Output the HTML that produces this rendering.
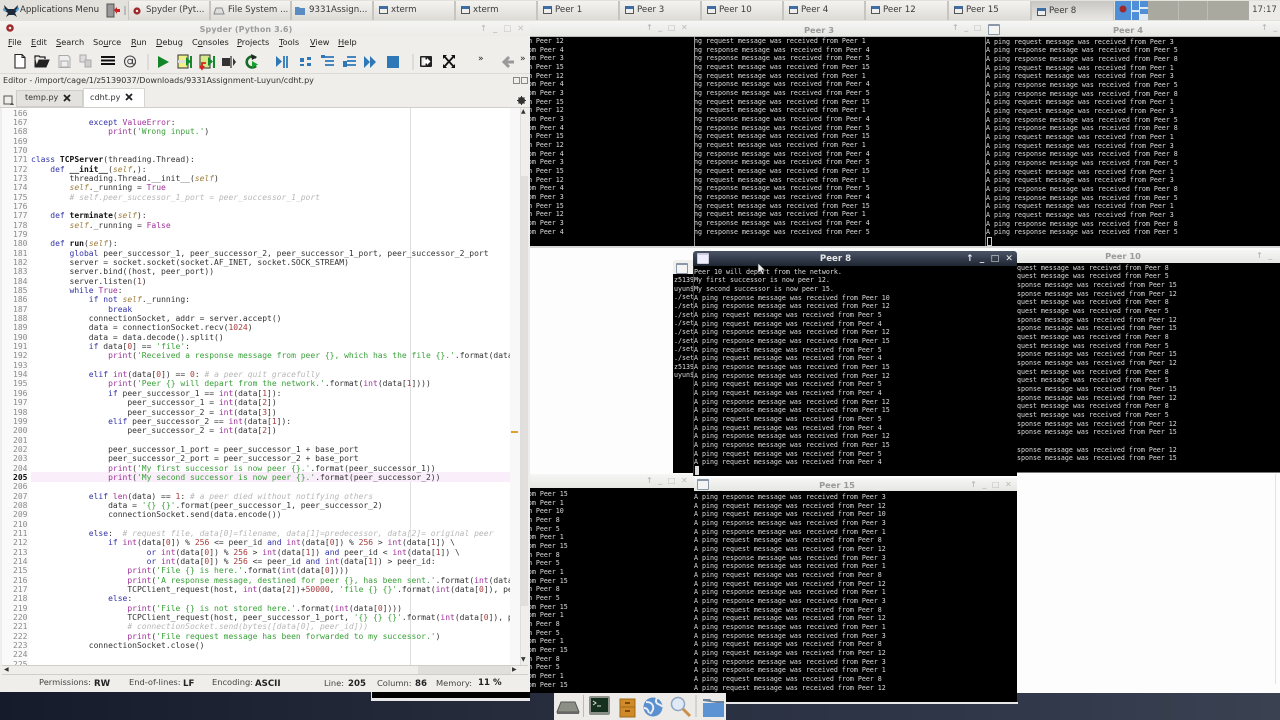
<!DOCTYPE html>
<html style="background:#252b3a"><head><meta charset="utf-8"><style>
html,body{margin:0;padding:0;width:1280px;height:720px;overflow:hidden}
#w{position:absolute;left:0;top:0;width:1280px;height:720px;overflow:hidden;filter:blur(.3px);font-family:"DejaVu Sans","Liberation Sans",sans-serif}
div,pre,span.a,svg.a{position:absolute}
.t{white-space:nowrap}
.tb{top:1px;height:19px;width:80px;background:linear-gradient(#f4f3f0,#dcdbd6);border:1px solid #c6c5c0;border-width:0 1px;box-sizing:border-box;font-size:8.65px;line-height:19px;color:#3a3a3a;white-space:nowrap;padding-left:18px}
.tb i{position:absolute;left:5px;top:5px;width:9px;height:8px;border:1px solid #555;border-top:3px solid #3f6ea5;box-sizing:border-box;background:#eee}
.m{top:36px;font-size:8.2px;line-height:12px;color:#222;white-space:nowrap}
.m u{text-decoration:underline}
.wt{font-size:8.3px;font-weight:bold;color:#9a9a9a;white-space:nowrap;text-align:center;line-height:12px}
.ctl{font-size:8px;color:#bbb;white-space:pre;line-height:10px;font-weight:bold}
.term{background:#000;overflow:hidden}
pre.x{margin:0;font-family:"DejaVu Sans Mono","Liberation Mono",monospace;font-size:7.4px;line-height:8.67px;color:#dcdcdc;white-space:pre;transform:scaleX(.898);transform-origin:0 0}
pre.c{margin:0;left:0;top:0;font-family:"DejaVu Sans Mono","Liberation Mono",monospace;font-size:8px;line-height:9.34px;color:#333;white-space:pre}
pre.c b{font-weight:bold;color:#111}
.k{color:#3232a8}.s{color:#3aa03a}.p{color:#a0309a}.n{color:#a83a3a}.o{color:#b8b8b8;font-style:italic}.f{color:#a08040;font-style:italic}
.st{top:676px;font-size:8.3px;line-height:12px;color:#444;white-space:nowrap}
.st b{color:#222;font-size:8.6px}
.winicon{width:10px;height:8px;border:1px solid #8a97a8;border-top:2px solid #8a97a8;background:#f4f4f4;border-radius:1px}
</style></head><body><div id="w">

<!-- wallpaper -->
<div style="left:0;top:0;width:1280px;height:720px;background:#252b3a"></div>
<div style="left:0;top:690px;width:1280px;height:30px;background:linear-gradient(90deg,#161b2b,#262c3c 40%,#30384a 80%,#3a4252)"></div>

<!-- top panel -->
<div style="left:0;top:0;width:1280px;height:21px;background:#e2e1dc"></div>
<svg class="a" style="left:3px;top:3px" width="16" height="15" viewBox="0 0 16 15"><path d="M1 2l4 4h6l4-4-1 6-2 2 2 4-3-2H6l-3 2 2-4-3-2z" fill="#1d2a3a"/><path d="M0 6l3 2M16 5l-3 3" stroke="#4aa0d8" stroke-width="2"/></svg>
<div class="t" style="left:20px;top:4px;font-size:8.65px;line-height:12px;color:#333">Applications Menu</div>
<svg class="a" style="left:106px;top:3px" width="16" height="15"><rect x="1" y="1" width="7" height="13" fill="#999" stroke="#555"/><path d="M8 7l3-3v2h3v3h-3v2z" fill="#d02020"/></svg>
<div style="left:124px;top:6px;width:2px;height:9px;background:#bbb"></div>
<div class="tb" style="left:128px;width:82px;padding-left:17px">Spyder (Pyt...<svg class="a" style="left:3px;top:5px" width="10" height="10"><circle cx="5" cy="5" r="3.6" fill="#a02a2a"/><circle cx="5" cy="5" r="1.2" fill="#eee"/></svg></div>
<div class="tb" style="left:210px;width:81px;padding-left:17px">File System ...<svg class="a" style="left:2px;top:5px" width="12" height="10"><path d="M1 8l2-6h6l2 6z" fill="#ddd" stroke="#888"/></svg></div>
<div class="tb" style="left:291px;width:82px;padding-left:17px">9331Assign...<svg class="a" style="left:3px;top:5px" width="11" height="10"><path d="M0 1h4l1 1h5v7H0z" fill="#5a8cc4"/></svg></div>
<div class="tb" style="left:373px;width:82px;padding-left:17px">xterm<i></i></div>
<div class="tb" style="left:455px;width:82px;padding-left:17px">xterm<i></i></div>
<div class="tb" style="left:537px;width:82px;padding-left:17px">Peer 1<i></i></div>
<div class="tb" style="left:619px;width:82px;padding-left:17px">Peer 3<i></i></div>
<div class="tb" style="left:701px;width:82px;padding-left:17px">Peer 10<i></i></div>
<div class="tb" style="left:783px;width:82px;padding-left:17px">Peer 4<i></i></div>
<div class="tb" style="left:865px;width:83px;padding-left:17px">Peer 12<i></i></div>
<div class="tb" style="left:948px;width:83px;padding-left:17px">Peer 15<i></i></div>
<div class="tb" style="left:1031px;width:83px;padding-left:17px;background:linear-gradient(#c8c7c4,#e8e7e4);line-height:21px">Peer 8<i style="top:7px"></i></div>
<div style="left:1115px;top:1px;width:33px;height:19px;background:#dfe9f4"></div>
<svg class="a" style="left:1115px;top:1px" width="33" height="19"><rect width="16" height="19" fill="#4f8fd8"/><rect x="17" y="0" width="7" height="9" fill="#4f8fd8"/><rect x="25" y="0" width="8" height="6" fill="#4f8fd8"/><rect x="17" y="11" width="7" height="8" fill="#4f8fd8"/><rect x="25" y="8" width="8" height="5" fill="#4f8fd8"/><circle cx="8" cy="8" r="3.5" fill="#a02a2a"/></svg>
<div style="left:1148px;top:1px;width:100px;height:19px;background:#a9a99f"></div>
<div style="left:1178px;top:1px;width:1px;height:19px;background:#bdbdb5"></div>
<div style="left:1207px;top:1px;width:1px;height:19px;background:#bdbdb5"></div>
<div style="left:1248px;top:1px;width:32px;height:19px;background:#ecebe7;font-size:8.65px;line-height:19px;text-align:center;color:#444;border-left:1px solid #aaa;box-sizing:border-box">17:17</div>

<!-- white backgrounds -->
<div style="left:530px;top:246px;width:750px;height:447px;background:#fdfdfd"></div>
<div style="left:530px;top:246px;width:750px;height:2px;background:#d8d8d6"></div>
<div style="left:1275px;top:474px;width:1px;height:210px;background:#e2e2e2"></div>

<!-- Peer 1 window -->
<div style="left:530px;top:21px;width:164px;height:16px;background:linear-gradient(#f6f6f4,#e6e6e3);border-bottom:1px solid #bbb;box-sizing:border-box"></div>
<div class="ctl" style="left:646px;top:23px">↑  _  □  ✕</div>
<div class="term" style="left:530px;top:37px;width:164px;height:209px"><pre class="x" style="left:-158px;top:0">A ping request message was received from Peer 12
A ping response message was received from Peer 4
A ping response message was received from Peer 3
A ping request message was received from Peer 15
A ping request message was received from Peer 12
A ping response message was received from Peer 4
A ping response message was received from Peer 3
A ping request message was received from Peer 15
A ping request message was received from Peer 12
A ping response message was received from Peer 3
A ping response message was received from Peer 4
A ping request message was received from Peer 15
A ping request message was received from Peer 12
A ping response message was received from Peer 4
A ping response message was received from Peer 3
A ping request message was received from Peer 15
A ping request message was received from Peer 12
A ping response message was received from Peer 4
A ping response message was received from Peer 3
A ping request message was received from Peer 15
A ping request message was received from Peer 12
A ping response message was received from Peer 3
A ping response message was received from Peer 4</pre></div>

<!-- Peer 3 -->
<div style="left:694px;top:21px;width:292px;height:16px;background:linear-gradient(#f6f6f4,#e6e6e3);border-bottom:1px solid #bbb;box-sizing:border-box"></div>
<div class="wt" style="left:694px;top:24px;width:250px">Peer 3</div>
<div class="ctl" style="left:952px;top:23px">↑  _  □</div>
<div class="term" style="left:694px;top:37px;width:292px;height:209px;border-left:1px solid #999;box-sizing:border-box"><pre class="x" style="left:-17px;top:0">A ping request message was received from Peer 1
A ping response message was received from Peer 4
A ping response message was received from Peer 5
A ping request message was received from Peer 15
A ping request message was received from Peer 1
A ping response message was received from Peer 4
A ping response message was received from Peer 5
A ping request message was received from Peer 15
A ping request message was received from Peer 1
A ping response message was received from Peer 4
A ping response message was received from Peer 5
A ping request message was received from Peer 15
A ping request message was received from Peer 1
A ping response message was received from Peer 4
A ping response message was received from Peer 5
A ping request message was received from Peer 15
A ping request message was received from Peer 1
A ping response message was received from Peer 5
A ping response message was received from Peer 4
A ping request message was received from Peer 15
A ping request message was received from Peer 1
A ping response message was received from Peer 4
A ping response message was received from Peer 5</pre></div>

<!-- Peer 4 -->
<div style="left:986px;top:21px;width:294px;height:16px;background:linear-gradient(#f6f6f4,#e6e6e3);border-bottom:1px solid #bbb;box-sizing:border-box"></div>
<div class="winicon" style="left:988px;top:24px"></div>
<div class="wt" style="left:1028px;top:24px;width:200px">Peer 4</div>
<div class="ctl" style="left:1261px;top:23px">↑  _</div>
<div class="term" style="left:985px;top:37px;width:295px;height:209px;border-left:1px solid #777;box-sizing:border-box"><pre class="x" style="left:0;top:0.500px">A ping request message was received from Peer 3
A ping response message was received from Peer 5
A ping response message was received from Peer 8
A ping request message was received from Peer 1
A ping request message was received from Peer 3
A ping response message was received from Peer 5
A ping response message was received from Peer 8
A ping request message was received from Peer 1
A ping request message was received from Peer 3
A ping response message was received from Peer 5
A ping response message was received from Peer 8
A ping request message was received from Peer 1
A ping request message was received from Peer 3
A ping response message was received from Peer 8
A ping response message was received from Peer 5
A ping request message was received from Peer 1
A ping request message was received from Peer 3
A ping response message was received from Peer 8
A ping response message was received from Peer 5
A ping request message was received from Peer 1
A ping request message was received from Peer 3
A ping response message was received from Peer 8
A ping response message was received from Peer 5</pre><div style="left:1px;top:200px;width:3px;height:7px;border:1px solid #ccc"></div></div>

<!-- back xterm -->
<div style="left:673px;top:260px;width:21px;height:14px;background:#f0f0ee;border-radius:3px 0 0 0"></div>
<div class="winicon" style="left:676px;top:263px"></div>
<div class="term" style="left:673px;top:274px;width:21px;height:199px"><pre class="x" style="left:1px;top:2px">z5139
uyun$
./set
./set
./set
./set
./set
./set
./set
./set
z5139
uyun$</pre></div>

<!-- Peer 10 -->
<div style="left:1017px;top:250px;width:263px;height:13px;background:linear-gradient(#f6f6f4,#e6e6e3)"></div>
<div class="wt" style="left:1017px;top:250px;width:212px">Peer 10</div>
<div class="ctl" style="left:1256px;top:251px">↑  _</div>
<div class="term" style="left:1017px;top:263px;width:263px;height:209px"><pre class="x" style="left:-36px;top:0.700px">A ping request message was received from Peer 8
A ping request message was received from Peer 5
A ping response message was received from Peer 15
A ping response message was received from Peer 12
A ping request message was received from Peer 8
A ping request message was received from Peer 5
A ping response message was received from Peer 12
A ping response message was received from Peer 15
A ping request message was received from Peer 8
A ping request message was received from Peer 5
A ping response message was received from Peer 15
A ping response message was received from Peer 12
A ping request message was received from Peer 8
A ping request message was received from Peer 5
A ping response message was received from Peer 15
A ping response message was received from Peer 12
A ping request message was received from Peer 8
A ping request message was received from Peer 5
A ping response message was received from Peer 12
A ping response message was received from Peer 15

A ping response message was received from Peer 12
A ping response message was received from Peer 15</pre></div>
<div style="left:1017px;top:472px;width:263px;height:1px;background:#777"></div>

<!-- Peer 15 -->
<div style="left:693px;top:476px;width:325px;height:2px;background:#fff"></div>
<div style="left:694px;top:478px;width:323px;height:13px;background:linear-gradient(#f6f6f4,#e6e6e3)"></div>
<div class="winicon" style="left:697px;top:479px"></div>
<div class="wt" style="left:694px;top:479px;width:286px">Peer 15</div>
<div class="ctl" style="left:970px;top:480px">↑  _  □  ✕</div>
<div class="term" style="left:694px;top:491px;width:323px;height:211px"><pre class="x" style="left:0;top:2px">A ping response message was received from Peer 3
A ping request message was received from Peer 12
A ping request message was received from Peer 10
A ping response message was received from Peer 3
A ping response message was received from Peer 1
A ping request message was received from Peer 8
A ping request message was received from Peer 12
A ping response message was received from Peer 3
A ping response message was received from Peer 1
A ping request message was received from Peer 8
A ping request message was received from Peer 12
A ping response message was received from Peer 1
A ping response message was received from Peer 3
A ping request message was received from Peer 8
A ping request message was received from Peer 12
A ping response message was received from Peer 1
A ping response message was received from Peer 3
A ping request message was received from Peer 8
A ping request message was received from Peer 12
A ping response message was received from Peer 3
A ping response message was received from Peer 1
A ping request message was received from Peer 8
A ping request message was received from Peer 12</pre></div>
<div style="left:693px;top:702px;width:325px;height:2px;background:#e8e8e8"></div>

<!-- Peer 12 (bottom-left) -->
<div style="left:530px;top:474px;width:164px;height:14px;background:linear-gradient(#f6f6f4,#e6e6e3)"></div>
<div class="ctl" style="left:646px;top:476px">↑  _  □  ✕</div>
<div class="term" style="left:530px;top:488px;width:164px;height:205px"><pre class="x" style="left:-158px;top:2px">A ping response message was received from Peer 15
A ping response message was received from Peer 1
A ping request message was received from Peer 10
A ping request message was received from Peer 8
A ping request message was received from Peer 5
A ping response message was received from Peer 1
A ping response message was received from Peer 15
A ping request message was received from Peer 8
A ping request message was received from Peer 5
A ping response message was received from Peer 1
A ping response message was received from Peer 15
A ping request message was received from Peer 8
A ping request message was received from Peer 5
A ping response message was received from Peer 15
A ping response message was received from Peer 1
A ping request message was received from Peer 8
A ping request message was received from Peer 5
A ping response message was received from Peer 1
A ping response message was received from Peer 15
A ping request message was received from Peer 8
A ping request message was received from Peer 5
A ping response message was received from Peer 1
A ping response message was received from Peer 15</pre></div>

<!-- Peer 8 active -->
<div style="left:693px;top:251px;width:324px;height:15px;background:linear-gradient(#4a5567,#1f2633);border-radius:3px 3px 0 0"></div>
<div class="winicon" style="left:697px;top:253px;border-color:#ccd;background:#eef"></div>
<div class="wt" style="left:693px;top:253px;width:285px;color:#e8e8e8;font-size:8.6px">Peer 8</div>
<div class="ctl" style="left:966px;top:254px;color:#eee;font-size:9px">↑  _  □  ✕</div>
<div class="term" style="left:693px;top:266px;width:324px;height:210px;border-left:1px solid #333;box-sizing:border-box"><pre class="x" style="left:0;top:1.500px">Peer 10 will depart from the network.
My first successor is now peer 12.
My second successor is now peer 15.
A ping response message was received from Peer 10
A ping response message was received from Peer 12
A ping request message was received from Peer 5
A ping request message was received from Peer 4
A ping response message was received from Peer 12
A ping response message was received from Peer 15
A ping request message was received from Peer 5
A ping request message was received from Peer 4
A ping response message was received from Peer 15
A ping response message was received from Peer 12
A ping request message was received from Peer 5
A ping request message was received from Peer 4
A ping response message was received from Peer 12
A ping response message was received from Peer 15
A ping request message was received from Peer 5
A ping request message was received from Peer 4
A ping response message was received from Peer 12
A ping response message was received from Peer 15
A ping request message was received from Peer 5
A ping request message was received from Peer 4</pre><div style="left:1px;top:200px;width:4px;height:9px;background:#ddd"></div></div>
<svg class="a" style="left:757px;top:262px" width="9" height="13"><path d="M1 1v10l2.500-2 2 3.500 1.500-1-2-3.500h3z" fill="#eee" stroke="#333" stroke-width=".6"/></svg>

<!-- strip behind spyder -->
<div style="left:371px;top:690px;width:159px;height:11px;background:#000;border:solid #e8e8e8;border-width:0 0 3px 1px;box-sizing:border-box"></div>

<!-- Spyder window -->
<div style="left:0;top:21px;width:530px;height:671px;background:#efeeeb"></div>
<div style="left:0;top:21px;width:530px;height:15px;background:linear-gradient(#f4f4f2,#ecebe8)"></div>
<svg class="a" style="left:5px;top:23px" width="10" height="10"><circle cx="5" cy="5" r="3.8" fill="#a02a2a"/><circle cx="5" cy="5" r="1.300" fill="#eee"/></svg>
<div class="wt" style="left:0;top:24px;width:492px;color:#9c9c9c;font-size:8px;letter-spacing:.1px">Spyder (Python 3.6)</div>
<div class="ctl" style="left:480px;top:24px;color:#c4c4c4;font-size:8.5px">↑  _  □  ✕</div>
<div class="m" style="left:8px"><u>F</u>ile</div>
<div class="m" style="left:31px"><u>E</u>dit</div>
<div class="m" style="left:56px"><u>S</u>earch</div>
<div class="m" style="left:93px">So<u>u</u>rce</div>
<div class="m" style="left:131px"><u>R</u>un</div>
<div class="m" style="left:156px"><u>D</u>ebug</div>
<div class="m" style="left:192px">C<u>o</u>nsoles</div>
<div class="m" style="left:237px"><u>P</u>rojects</div>
<div class="m" style="left:279px"><u>T</u>ools</div>
<div class="m" style="left:310px"><u>V</u>iew</div>
<div class="m" style="left:338px"><u>H</u>elp</div>

<!-- toolbar icons -->
<svg class="a" style="left:0;top:50px" width="530" height="24" viewBox="0 0 530 24">
<path d="M15 4.500h7l3 3v10.500H15z" fill="#fff" stroke="#222" stroke-width="1.100"/><path d="M22 4.500v3h3" fill="none" stroke="#222"/>
<path d="M35 8v9h11l3-7H39l-2 5" fill="#222" stroke="#222"/><path d="M35 8V6h4l1 1h5v2" fill="none" stroke="#222" stroke-width="1.300"/>
<path d="M59 5.500h9l2 2v10H59z" fill="#eee" stroke="#aaa"/><rect x="61" y="11" width="7" height="6" fill="none" stroke="#aaa"/>
<rect x="80" y="5" width="6" height="7" fill="#ddd" stroke="#aaa"/><rect x="85" y="10" width="6" height="7" fill="#ccc" stroke="#aaa"/>
<path d="M101 7h14M101 10.500h14M101 14h14" stroke="#111" stroke-width="2"/>
<circle cx="130" cy="11.500" r="5.500" fill="none" stroke="#444" stroke-width="1.100"/><circle cx="130" cy="11.500" r="2.300" fill="none" stroke="#444"/><path d="M132.500 9v4c0 1.500 2.500 1.500 3 0" fill="none" stroke="#444"/>
<path d="M158 6l11 6-11 6z" fill="#14862a"/>
<rect x="178" y="5" width="10" height="13" fill="#f0ef88" stroke="#333"/><rect x="178" y="10" width="10" height="3" fill="#ddd"/><path d="M186 7l5 4.500-5 4.500z" fill="#148a2a"/><rect x="190" y="6" width="2" height="12" fill="#148a2a"/>
<rect x="200" y="5" width="10" height="13" fill="#d8e888" stroke="#333"/><path d="M208 7l5 4.500-5 4.500z" fill="#148a2a"/><rect x="213" y="6" width="2" height="12" fill="#148a2a"/><path d="M206 13h-4v5m-2-2 2 3 2-3" fill="none" stroke="#e02020" stroke-width="1.800"/>
<rect x="222" y="8" width="8" height="8" fill="#333"/><path d="M231 6v12" stroke="#555" stroke-width="1.500"/><path d="M233 8l3 4-3 4z" fill="#333"/>
<path d="M256 8a5.500 5.500 0 1 0 0 8" fill="none" stroke="#1a6a2a" stroke-width="2.600"/><path d="M251 4l6 3-5 3z" fill="#222"/><path d="M252 11l6 3.500-6 3.500z" fill="#14a02a"/>
<path d="M276 6l6 5.500-6 5.500z" fill="#2f78b8"/><path d="M284 6v12M287 6v12" stroke="#2f78b8" stroke-width="1.800"/>
<path d="M300 8h4v4h-4zM307 7h4v3h-4zM307 13h4v3h-4zM300 14h4v2h-4z" fill="#2f78b8"/>
<path d="M321 5h4v3h-4z" fill="#2f78b8"/><path d="M325 7h9M325 11h9M325 15h9" stroke="#2f78b8" stroke-width="1.700"/>
<path d="M343 11h4v6h-4z" fill="#2f78b8"/><path d="M347 7h9M347 11h9M347 15h9" stroke="#2f78b8" stroke-width="1.700"/>
<path d="M364 6l6 6-6 6zM370 6l6 6-6 6z" fill="#2f78b8"/>
<rect x="387" y="6" width="12" height="12" fill="#2f78b8"/>
<rect x="420" y="6" width="12" height="11" fill="#222" rx="1"/><rect x="421.500" y="7.500" width="4" height="8" fill="#eee"/><path d="M424 9.500h3V8l3.500 3.500-3.500 3.500v-1.500h-3z" fill="#fff"/>
<path d="M444 6l10 11M454 6l-10 11" stroke="#111" stroke-width="1.800"/><path d="M443 5h4l-4 4zM455 5h-4l4 4zM443 18h4l-4-4zM455 18h-4l4-4z" fill="#111"/>
<path d="M514 12h-9m4-5-5 5 5 5" fill="none" stroke="#9a9a9a" stroke-width="3"/>
</svg>
<div class="t" style="left:478px;top:54px;font-size:9px;color:#222">»</div>
<div class="t" style="left:520px;top:54px;font-size:9px;color:#222">»</div>
<div style="left:147px;top:54px;width:2px;height:16px;background:#dddcd8"></div>
<div style="left:412px;top:54px;width:2px;height:16px;background:#dddcd8"></div>
<div style="left:0;top:73px;width:530px;height:1px;background:#dcdbd7"></div>

<div class="t" style="left:3px;top:75px;font-size:8.04px;line-height:11px;color:#333">Editor - /import/cage/1/z5139037/Downloads/9331Assignment-Luyun/cdht.py</div>
<div style="left:513px;top:77px;width:5px;height:5px;border:1px solid #888"></div>
<div style="left:521px;top:77px;width:5px;height:5px;border:1px solid #888"></div>

<!-- tabs -->
<svg class="a" style="left:3px;top:95px" width="12" height="11"><path d="M1 1h8v8H1z" fill="none" stroke="#555"/><path d="M9 7l2 3H7z" fill="#555"/></svg>
<div style="left:16px;top:90px;width:67px;height:17px;background:#e3e2de;border:1px solid #cfcec9;box-sizing:border-box"></div>
<div class="t" style="left:25px;top:92px;font-size:8px;line-height:12px;color:#333">temp.py</div>
<svg class="a" style="left:62px;top:93px" width="10" height="10"><path d="M2 2l6 6M8 2l-6 6" stroke="#222" stroke-width="1.800"/></svg>
<div style="left:83px;top:88px;width:62px;height:20px;background:#fff;border:1px solid #d6d5d0;border-bottom:0;box-sizing:border-box"></div>
<div class="t" style="left:90px;top:91px;font-size:8.1px;line-height:12px;color:#333">cdht.py</div>
<svg class="a" style="left:124px;top:92px" width="10" height="10"><path d="M2 2l6 6M8 2l-6 6" stroke="#222" stroke-width="1.800"/></svg>
<svg class="a" style="left:516px;top:95px" width="12" height="12"><circle cx="5.500" cy="5.500" r="3.500" fill="#333"/><circle cx="5.500" cy="5.500" r="1.200" fill="#eee"/><path d="M5.500 1v9M1 5.500h9M2.500 2.500l6 6M8.500 2.500l-6 6" stroke="#333"/></svg>
<div style="left:0;top:107px;width:530px;height:1px;background:#cfcec9"></div>

<!-- editor -->
<div style="left:2px;top:108px;width:508px;height:557px;background:#fff;overflow:hidden">
<div style="left:0;top:0;width:27px;height:557px;background:#fafafa"></div>
<div style="left:408px;top:0;width:1px;height:557px;background:#dedede"></div>
<div style="left:29px;top:364px;width:479px;height:9.500px;background:#f9eef9"></div>
<pre class="c" style="left:11px;top:0.500px;color:#8a8a8a">166
167
168
169
170
171
172
173
174
175
176
177
178
179
180
181
182
183
184
185
186
187
188
189
190
191
192
193
194
195
196
197
198
199
200
201
202
203
204
<b>205</b>
206
207
208
209
210
211
212
213
214
215
216
217
218
219
220
221
222
223
224
225</pre>
<pre class="c" style="left:29px;top:0.500px">

            <span class="k">except</span> <span class="p">ValueError</span>:
                <span class="p">print</span>(<span class="s">'Wrong input.'</span>)


<span class="k">class</span> <b>TCPServer</b>(threading.Thread):
    <span class="k">def</span> <b>__init__</b>(<span class="f">self</span>,):
        threading.Thread.__init__(<span class="f">self</span>)
        <span class="f">self</span>._running = <span class="p">True</span>
        <span class="o"># self.peer_successor_1_port = peer_successor_1_port</span>

    <span class="k">def</span> <b>terminate</b>(<span class="f">self</span>):
        <span class="f">self</span>._running = <span class="p">False</span>

    <span class="k">def</span> <b>run</b>(<span class="f">self</span>):
        <span class="k">global</span> peer_successor_1, peer_successor_2, peer_successor_1_port, peer_successor_2_port
        server = socket.socket(socket.AF_INET, socket.SOCK_STREAM)
        server.bind((host, peer_port))
        server.listen(<span class="n">1</span>)
        <span class="k">while</span> <span class="p">True</span>:
            <span class="k">if</span> <span class="k">not</span> <span class="f">self</span>._running:
                <span class="k">break</span>
            connectionSocket, addr = server.accept()
            data = connectionSocket.recv(<span class="n">1024</span>)
            data = data.decode().split()
            <span class="k">if</span> data[<span class="n">0</span>] == <span class="s">'file'</span>:
                <span class="p">print</span>(<span class="s">'Received a response message from peer {}, which has the file {}.'</span>.format(data[1], data[2]))

            <span class="k">elif</span> <span class="p">int</span>(data[<span class="n">0</span>]) == <span class="n">0</span>: <span class="o"># a peer quit gracefully</span>
                <span class="p">print</span>(<span class="s">'Peer {} will depart from the network.'</span>.format(<span class="p">int</span>(data[<span class="n">1</span>])))
                <span class="k">if</span> peer_successor_1 == <span class="p">int</span>(data[<span class="n">1</span>]):
                    peer_successor_1 = <span class="p">int</span>(data[<span class="n">2</span>])
                    peer_successor_2 = <span class="p">int</span>(data[<span class="n">3</span>])
                <span class="k">elif</span> peer_successor_2 == <span class="p">int</span>(data[<span class="n">1</span>]):
                    peer_successor_2 = <span class="p">int</span>(data[<span class="n">2</span>])

                peer_successor_1_port = peer_successor_1 + base_port
                peer_successor_2_port = peer_successor_2 + base_port
                <span class="p">print</span>(<span class="s">'My first successor is now peer {}.'</span>.format(peer_successor_1))
                <span class="p">print</span>(<span class="s">'My second successor is now peer {}.'</span>.format(peer_successor_2))

            <span class="k">elif</span> <span class="p">len</span>(data) == <span class="n">1</span>: <span class="o"># a peer died without notifying others</span>
                data = <span class="s">'{} {}'</span>.format(peer_successor_1, peer_successor_2)
                connectionSocket.send(data.encode())

            <span class="k">else</span>:  <span class="o"># request file, data[0]=filename, data[1]=predecessor, data[2]= original peer</span>
                <span class="k">if</span> <span class="p">int</span>(data[<span class="n">0</span>]) % <span class="n">256</span> &lt;= peer_id <span class="k">and</span> <span class="p">int</span>(data[<span class="n">0</span>]) % <span class="n">256</span> &gt; <span class="p">int</span>(data[<span class="n">1</span>]) \
                        <span class="k">or</span> <span class="p">int</span>(data[<span class="n">0</span>]) % <span class="n">256</span> &gt; <span class="p">int</span>(data[<span class="n">1</span>]) <span class="k">and</span> peer_id &lt; <span class="p">int</span>(data[<span class="n">1</span>]) \
                        <span class="k">or</span> <span class="p">int</span>(data[<span class="n">0</span>]) % <span class="n">256</span> &lt;= peer_id <span class="k">and</span> <span class="p">int</span>(data[<span class="n">1</span>]) &gt; peer_id:
                    <span class="p">print</span>(<span class="s">'File {} is here.'</span>.format(<span class="p">int</span>(data[<span class="n">0</span>])))
                    <span class="p">print</span>(<span class="s">'A response message, destined for peer {}, has been sent.'</span>.format(<span class="p">int</span>(data[1])))
                    TCPClient_request(host, <span class="p">int</span>(data[<span class="n">2</span>])+<span class="n">50000</span>, <span class="s">'file {} {}'</span>.format(<span class="p">int</span>(data[<span class="n">0</span>]), peer_id))
                <span class="k">else</span>:
                    <span class="p">print</span>(<span class="s">'File {} is not stored here.'</span>.format(<span class="p">int</span>(data[<span class="n">0</span>])))
                    TCPClient_request(host, peer_successor_1_port, <span class="s">'{} {} {}'</span>.format(<span class="p">int</span>(data[<span class="n">0</span>]), peer_id))
                    <span class="o"># connectionSocket.send(bytes([data[0], peer_id]))</span>
                    <span class="p">print</span>(<span class="s">'File request message has been forwarded to my successor.'</span>)
            connectionSocket.close()</pre>
</div>

<!-- scrollbars -->
<div style="left:510px;top:108px;width:10px;height:557px;background:#f8f8f8"></div>
<div style="left:511px;top:431px;width:7px;height:2px;background:#e0a030"></div>
<div style="left:520px;top:108px;width:8px;height:557px;background:#efeeeb;border-left:1px solid #ddd;box-sizing:border-box"></div>
<div style="left:521px;top:176px;width:7px;height:430px;background:#e0dfdb"></div>
<div class="t" style="left:521px;top:108px;font-size:6px;color:#333">▲</div>
<div class="t" style="left:521px;top:656px;font-size:6px;color:#333">▼</div>
<div style="left:2px;top:665px;width:526px;height:10px;background:#efeeeb;border:solid #cfcec9;border-width:1px 0;box-sizing:border-box"></div>
<div style="left:418px;top:666px;width:93px;height:8px;background:#e0dfdb"></div>
<div class="t" style="left:4px;top:666px;font-size:6px;color:#333">◀</div>
<div class="t" style="left:512px;top:666px;font-size:6px;color:#333">▶</div>

<!-- status -->
<div class="st" style="left:39px">Permissions:</div><div class="st" style="left:94px;top:677px"><b>RW</b></div>
<div class="st" style="left:129px">End-of-lines:</div><div class="st" style="left:183px;top:677px"><b>LF</b></div>
<div class="st" style="left:212px">Encoding:</div><div class="st" style="left:255px;top:677px"><b>ASCII</b></div>
<div class="st" style="left:324px;top:677px">Line:</div><div class="st" style="left:348px;top:677px"><b>205</b></div>
<div class="st" style="left:377px;top:677px">Column:</div><div class="st" style="left:415px;top:677px"><b>86</b></div>
<div class="st" style="left:436px;top:677px">Memory:</div><div class="st" style="left:478px;top:676px"><b>11 %</b></div>

<!-- dock -->
<div style="left:554px;top:693px;width:172px;height:27px;background:#ecebe8"></div>
<svg class="a" style="left:554px;top:693px" width="172" height="27" viewBox="0 0 172 27">
<path d="M7 9h14l4 10H3z" fill="#8b8f86" stroke="#555"/><path d="M3 19h22v2H3z" fill="#666"/>
<path d="M29.500 2v22" stroke="#bbb"/>
<rect x="35" y="3" width="21" height="19" rx="2" fill="#8a8f88"/><rect x="37" y="5" width="17" height="14" fill="#16301f"/><path d="M39 8l3 2-3 2M43 13h4" stroke="#ddd" fill="none"/>
<rect x="66" y="6" width="15" height="18" fill="#d08a28" stroke="#a06a18"/><path d="M66 14h15" stroke="#a06a18"/><rect x="71" y="9" width="5" height="2" fill="#804808"/><rect x="71" y="17" width="5" height="2" fill="#804808"/>
<circle cx="99" cy="14" r="9.500" fill="#5a8fd0"/><path d="M92 9c4 0 6 1 7 4s-1 6-3 8M103 5c-2 3-1 5 1 6s4 1 4 3M90 15c3 0 4 2 5 5" stroke="#e8eef6" stroke-width="2" fill="none"/>
<circle cx="124" cy="11" r="6.500" fill="#dfeaf6" stroke="#8fa6c0" stroke-width="1.500"/><path d="M129 16l7 7" stroke="#c89048" stroke-width="3"/>
<path d="M142 2v22" stroke="#bbb"/>
<path d="M149 8V6h7l2 2h12v3z" fill="#6a7f98"/><rect x="149" y="10" width="21" height="14" fill="#5c93d3"/>
</svg>
</div></body></html>
